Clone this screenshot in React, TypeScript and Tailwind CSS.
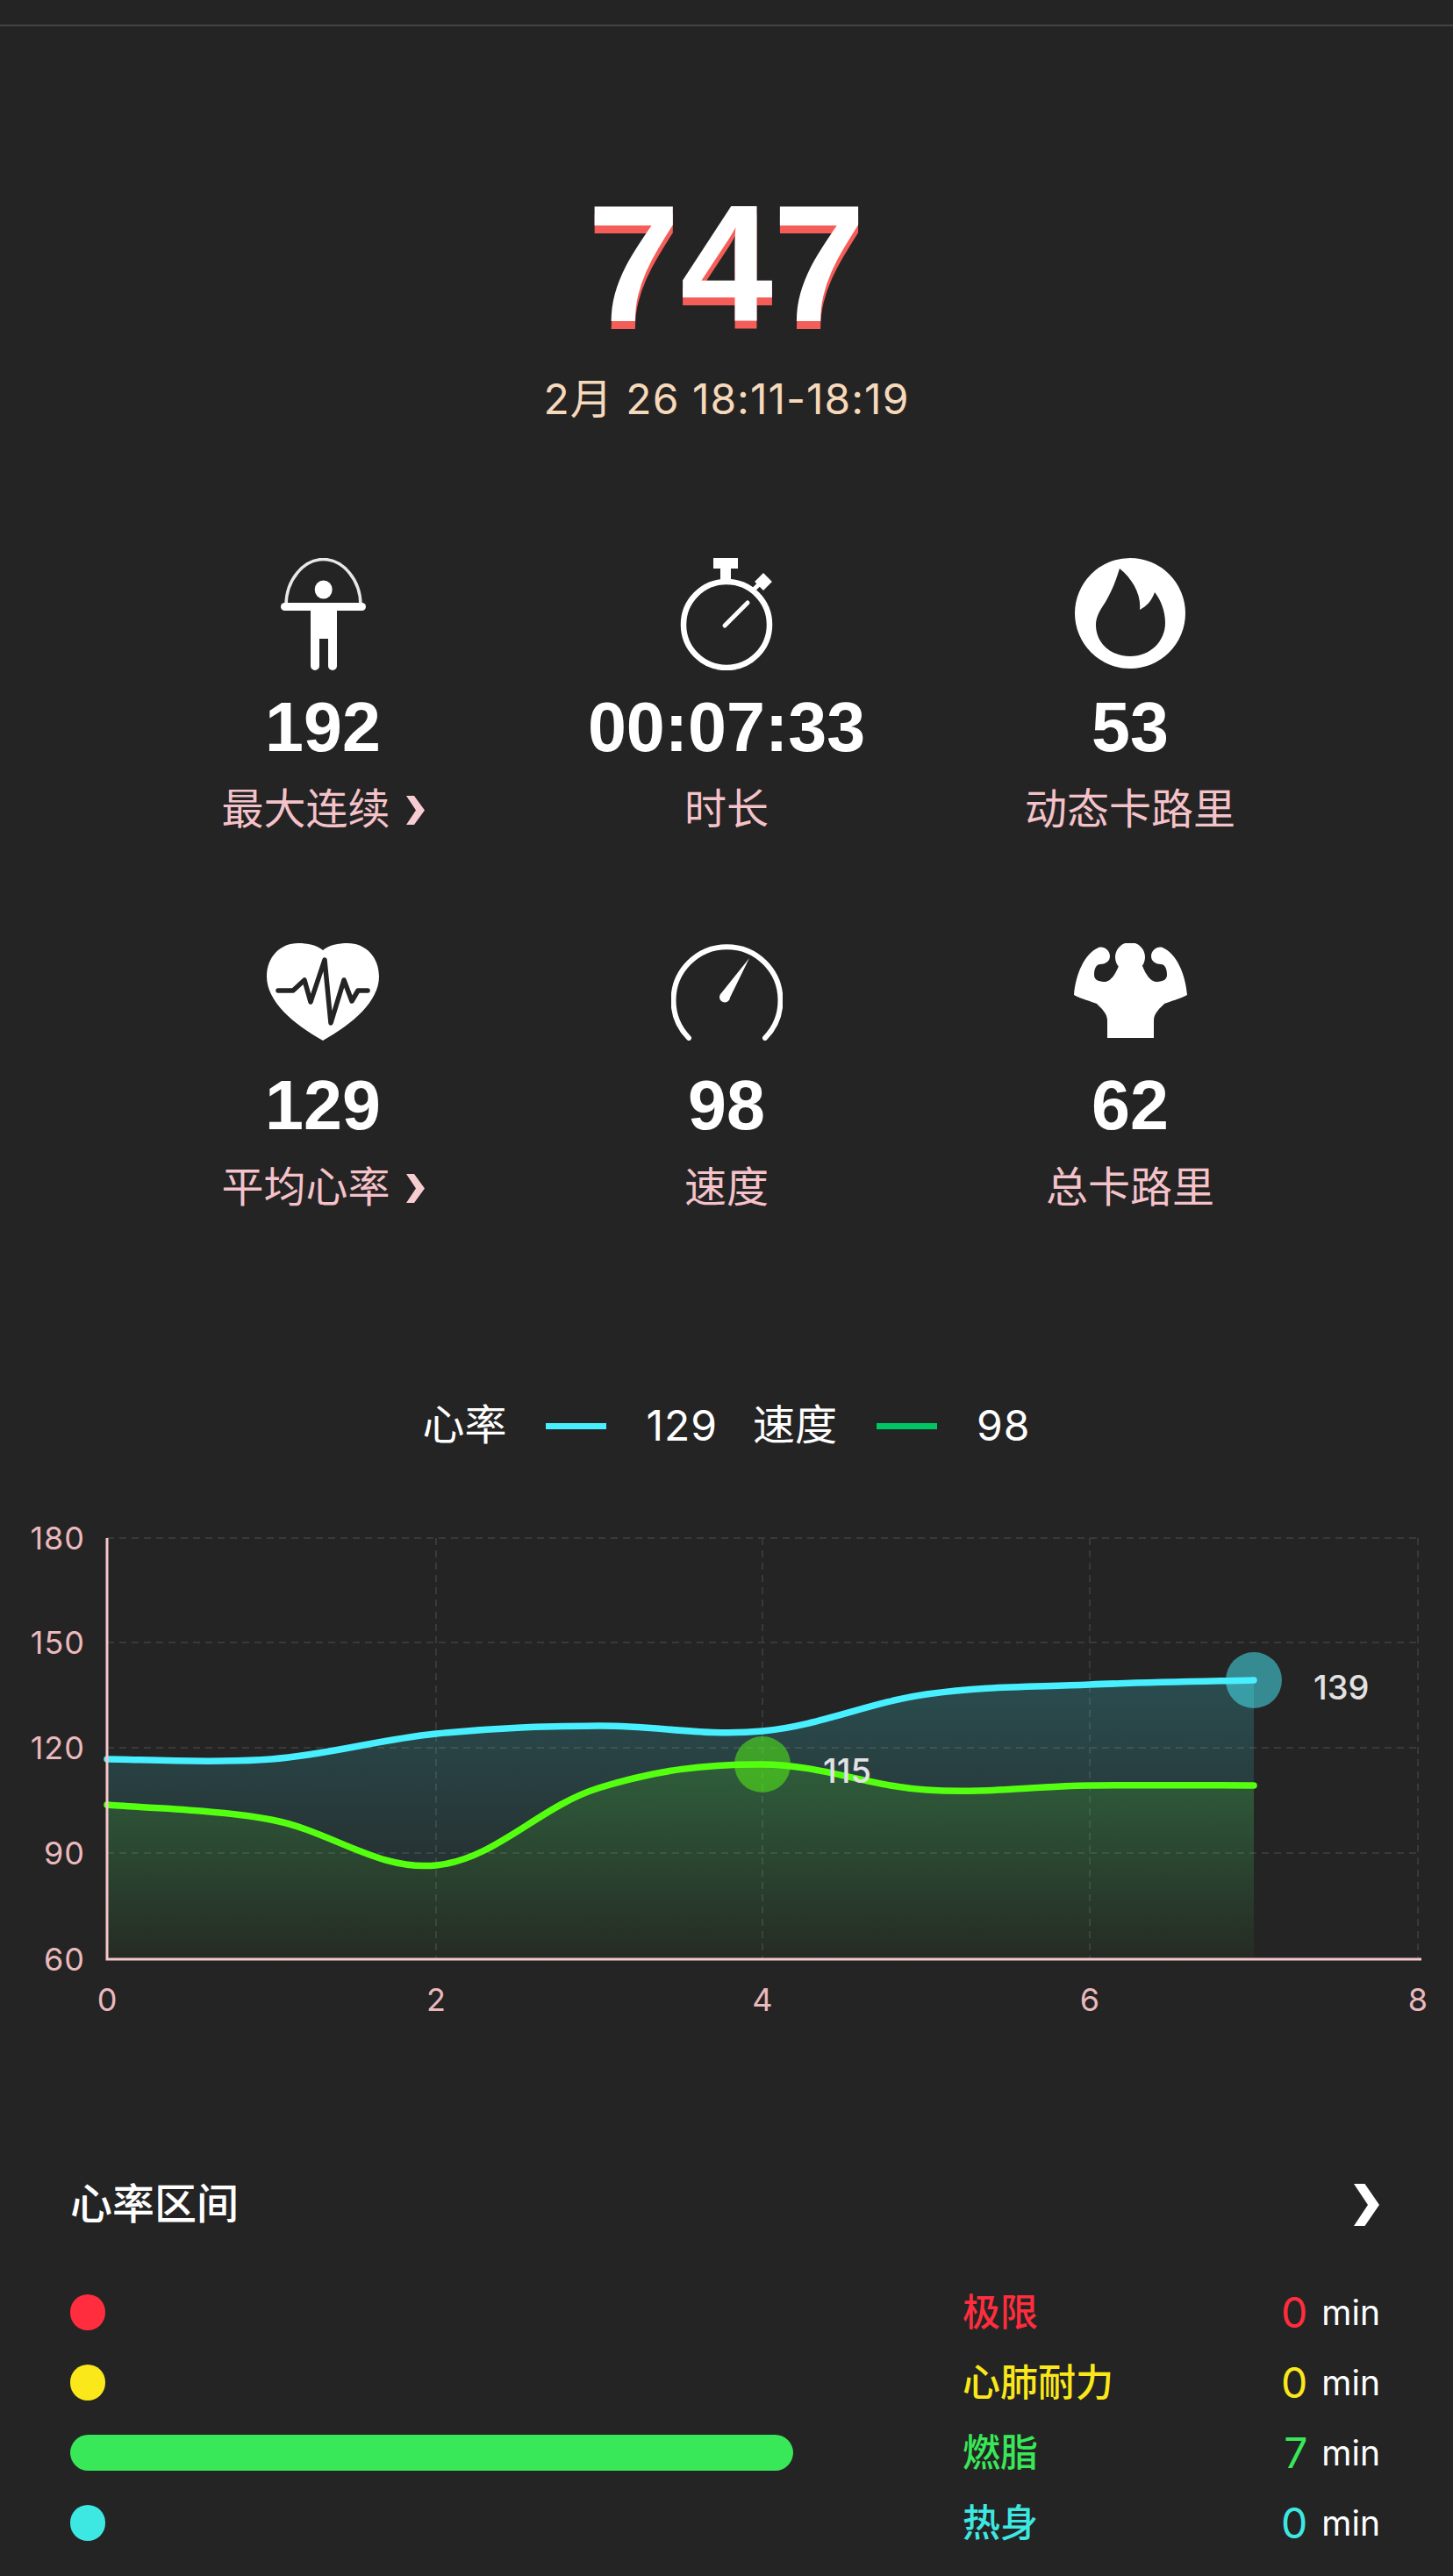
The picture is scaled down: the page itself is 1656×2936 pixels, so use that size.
import React from 'react';

const heartRate: [number, number][] = [
  [122, 2004], [309, 2004], [497, 1975], [682, 1966], [869, 1972], [1056, 1930], [1242, 1919], [1429, 1914],
];
const speed: [number, number][] = [
  [122, 2056], [309, 2073], [497, 2125], [682, 2037], [869, 2010], [1056, 2039], [1242, 2034], [1429, 2034],
];

// smooth line through the points, same feel as an echarts smooth series
const smoothPath = (pts: [number, number][]) => {
  let d = `M${pts[0][0]} ${pts[0][1]}`;
  for (let i = 0; i < pts.length - 1; i++) {
    const p0 = pts[Math.max(i - 1, 0)];
    const p1 = pts[i];
    const p2 = pts[i + 1];
    const p3 = pts[Math.min(i + 2, pts.length - 1)];
    const c1x = p1[0] + (p2[0] - p0[0]) * 0.18;
    const c1y = p1[1] + (p2[1] - p0[1]) * 0.18;
    const c2x = p2[0] - (p3[0] - p1[0]) * 0.18;
    const c2y = p2[1] - (p3[1] - p1[1]) * 0.18;
    d += ` C${c1x} ${c1y} ${c2x} ${c2y} ${p2[0]} ${p2[1]}`;
  }
  return d;
};

const Chevron = () => (
  <svg width="21" height="33" viewBox="0 0 21 33" className="shrink-0">
    <polygon points="0,0 9,0 21,16.5 9,33 0,33 11,16.5" fill="#f7cdd2" />
  </svg>
);

const RopeIcon = () => (
  <svg width="97" height="128" viewBox="0 0 97 128">
    <path d="M6 54C6 25 26 1.5 48.5 1.5S91 25 91 54" fill="none" stroke="#e8e8e8" strokeWidth="3.5" />
    <ellipse cx="48.7" cy="36" rx="10" ry="10.5" fill="#fff" />
    <rect x="0" y="51" width="97" height="9" rx="4.5" fill="#fff" />
    <path d="M34 58H64V123A5 5 0 0 1 54 123V92H44V123A5 5 0 0 1 34 123Z" fill="#fff" />
  </svg>
);

const WatchIcon = () => (
  <svg width="106" height="128" viewBox="0 0 106 128">
    <rect x="38" y="0" width="28" height="12" fill="#fff" />
    <rect x="46" y="12" width="12" height="15" fill="#fff" />
    <circle cx="53" cy="76" r="49" fill="none" stroke="#fff" strokeWidth="6.5" />
    <path d="M84 36L91 29" stroke="#fff" strokeWidth="5" />
    <rect x="88" y="20" width="14" height="14" transform="rotate(45 95 27)" fill="#fff" />
    <path d="M51 77L77 51" stroke="#fff" strokeWidth="5" strokeLinecap="round" />
  </svg>
);

const FireIcon = () => (
  <svg width="126" height="126" viewBox="0 0 126 126">
    <path
      fillRule="evenodd"
      fill="#fff"
      d="M63 0A63 63 0 1 1 63 126A63 63 0 1 1 63 0ZM51 12C46 28 42 38 35 50C28 60 24 68 24 76C24 97 41 112 63 112C86 112 103 95 103 74C103 60 98 48 91 39C88 48 82 55 74 59C76 42 66 24 51 12Z"
    />
  </svg>
);

const HeartIcon = () => (
  <svg width="128" height="111" viewBox="0 0 128 111">
    <path
      fill="#fff"
      d="M64 8C57 2 46 0 36 0C15 0 0 16 0 38C0 66 30 92 64 111C98 92 128 66 128 38C128 16 113 0 92 0C82 0 71 2 64 8Z"
    />
    <path
      d="M13 54H30L43 42L50 67L66 19L73 91L88 42L97 66L104 54H115"
      fill="none"
      stroke="#242424"
      strokeWidth="5.5"
      strokeLinejoin="round"
      strokeLinecap="round"
    />
  </svg>
);

const GaugeIcon = () => (
  <svg width="127" height="111" viewBox="0 0 127 111">
    <path d="M20 108A61 61 0 1 1 107 108" fill="none" stroke="#fff" strokeWidth="6" strokeLinecap="round" />
    <path d="M89 17L67 62A6 6 0 1 1 57 57Z" fill="#fff" />
  </svg>
);

const MuscleIcon = () => (
  <svg width="129" height="109" viewBox="0 0 129 109">
    <circle cx="64" cy="16" r="17" fill="#fff" />
    <path
      fill="#fff"
      d="M0 59C2 35 12 12 28 5C34 3 41 8 41 15C41 21 35 24 30 24C25 24 23 30 23 36C23 42 28 44 36 44C42 43 47 36 51 26L78 26C82 36 87 43 93 44C101 44 106 42 106 36C106 30 104 24 99 24C94 24 88 21 88 15C88 8 95 3 101 5C117 12 127 35 129 59C120 64 110 66 103 69C98 74 91 80 91 88L91 108L38 108L38 88C38 80 31 74 26 69C19 66 9 64 0 59Z"
    />
  </svg>
);

const StatCell = ({
  icon,
  value,
  label,
  arrow,
  iconBox,
}: {
  icon: React.ReactNode;
  value: string;
  label: string;
  arrow?: boolean;
  iconBox: string;
}) => (
  <div className="flex flex-col items-center">
    <div className={`flex items-start justify-center ${iconBox}`}>{icon}</div>
    <div className="mt-[25px] text-[79px] leading-[80px] font-bold text-white">{value}</div>
    <div className="mt-[30px] flex h-12 items-center gap-[18px] text-[48px] leading-[48px] text-[#f4c2c9]">
      <span>{label}</span>
      {arrow && <Chevron />}
    </div>
  </div>
);

const Chart = () => {
  const xTicks = [122, 497, 869, 1242, 1616];
  const yTicks = [1752, 1871, 1991, 2111, 2232];
  const xLabels = ['0', '2', '4', '6', '8'];
  const yLabels = ['180', '150', '120', '90', '60'];
  const hr = smoothPath(heartRate);
  const sp = smoothPath(speed);

  return (
    <svg viewBox="0 1720 1656 600" className="mt-[72px] block h-[600px] w-full [font-family:Inter,sans-serif]">
      <defs>
        <linearGradient id="hrFill" gradientUnits="userSpaceOnUse" x1="0" y1="1914" x2="0" y2="2232">
          <stop offset="0" stopColor="#44f0ff" stopOpacity="0.2" />
          <stop offset="1" stopColor="#44f0ff" stopOpacity="0" />
        </linearGradient>
        <linearGradient id="spFill" gradientUnits="userSpaceOnUse" x1="0" y1="2010" x2="0" y2="2232">
          <stop offset="0" stopColor="#55ff10" stopOpacity="0.15" />
          <stop offset="1" stopColor="#55ff10" stopOpacity="0.03" />
        </linearGradient>
      </defs>

      {/* grid */}
      {yTicks.slice(0, 4).map((y) => (
        <line key={y} x1="122" x2="1616" y1={y} y2={y} stroke="#393939" strokeWidth="2" strokeDasharray="8 6" />
      ))}
      {xTicks.slice(1).map((x) => (
        <line key={x} x1={x} x2={x} y1="1752" y2="2232" stroke="#393939" strokeWidth="2" strokeDasharray="8 6" />
      ))}

      {/* areas */}
      <path d={`${hr} L1429 2232 L122 2232 Z`} fill="url(#hrFill)" />
      <path d={`${sp} L1429 2232 L122 2232 Z`} fill="url(#spFill)" />

      {/* series lines */}
      <path d={hr} fill="none" stroke="#48f0ff" strokeWidth="7.5" strokeLinecap="round" />
      <path d={sp} fill="none" stroke="#55ff10" strokeWidth="7.5" strokeLinecap="round" />

      <circle cx="1429" cy="1914" r="32" fill="#48f0ff" fillOpacity="0.5" />
      <circle cx="869" cy="2010" r="32" fill="#55ff10" fillOpacity="0.5" />

      {/* axes */}
      <path d="M122 1752V2232H1620" fill="none" stroke="#f5c6cb" strokeWidth="3" />

      {yLabels.map((t, i) => (
        <text key={t} x="97" y={yTicks[i] + 13} textAnchor="end" fontSize="36" letterSpacing="1" fill="#eab9bd">
          {t}
        </text>
      ))}
      {xLabels.map((t, i) => (
        <text key={t} x={xTicks[i]} y="2291" textAnchor="middle" fontSize="36" fill="#eab9bd">
          {t}
        </text>
      ))}

      <text x="1497" y="1936" fontSize="38" fontWeight="500" fill="#e2e2e2">
        139
      </text>
      <text x="938" y="2031" fontSize="38" fontWeight="500" fill="#e2e2e2">
        115
      </text>
    </svg>
  );
};

const zones = [
  { name: '极限', mins: '0', bar: 'w-10 bg-[#ff2d3d]', text: 'text-[#ff2d3d]' },
  { name: '心肺耐力', mins: '0', bar: 'w-10 bg-[#fbe81a]', text: 'text-[#fbe81a]' },
  { name: '燃脂', mins: '7', bar: 'w-[824px] bg-[#38e858]', text: 'text-[#38e858]' },
  { name: '热身', mins: '0', bar: 'w-10 bg-[#3de8e2]', text: 'text-[#3de8e2]' },
];

export default function App() {
  return (
    <div className="min-h-[2936px] w-full bg-[#242424] [font-family:'Liberation_Sans','Noto_Sans_CJK_SC',sans-serif]">
      <div className="h-[30px] border-b-2 border-[#444444]" />

      {/* total jumps */}
      <div className="flex flex-col items-center pt-[175px]">
        <div className="text-[190px] leading-[190px] font-bold text-white [text-shadow:0_9px_0_#f55d58]">747</div>
        <div className="mt-9 text-[48px] leading-[48px] tracking-[1px] text-[#f6d9bb] [font-family:Inter,'Noto_Sans_CJK_SC',sans-serif]">
          2月 26 18:11-18:19
        </div>
      </div>

      {/* stats */}
      <div className="mt-[157px] grid grid-cols-3 gap-y-[128px] px-[138px]">
        <StatCell icon={<RopeIcon />} value="192" label="最大连续" arrow iconBox="h-[128px]" />
        <StatCell icon={<WatchIcon />} value="00:07:33" label="时长" iconBox="h-[128px]" />
        <StatCell icon={<FireIcon />} value="53" label="动态卡路里" iconBox="h-[128px]" />
        <StatCell icon={<HeartIcon />} value="129" label="平均心率" arrow iconBox="h-[120px]" />
        <StatCell icon={<GaugeIcon />} value="98" label="速度" iconBox="h-[120px]" />
        <StatCell icon={<MuscleIcon />} value="62" label="总卡路里" iconBox="h-[120px]" />
      </div>

      {/* legend */}
      <div className="mt-[223px] flex h-12 items-center justify-center text-[48px] leading-[48px] text-white">
        <span>心率</span>
        <span className="mx-[45px] h-[7px] w-[69px] bg-[#48f0ff]" />
        <span className="text-[48px] tracking-[1px] [font-family:Inter,sans-serif]">129</span>
        <span className="ml-[40px]">速度</span>
        <span className="mx-[45px] h-[7px] w-[69px] bg-[#00c763]" />
        <span className="text-[48px] tracking-[1px] [font-family:Inter,sans-serif]">98</span>
      </div>

      <Chart />

      {/* heart rate zones */}
      <div className="mt-[168px] flex h-12 items-center justify-between pr-[84px] pl-[80px]">
        <span className="text-[48px] leading-[48px] font-medium text-white">心率区间</span>
        <svg width="29" height="48" viewBox="0 0 29 48">
          <polygon points="0,0 12.5,0 29,24 12.5,48 0,48 16,24" fill="#fff" />
        </svg>
      </div>

      <div className="mt-[78px] flex flex-col gap-[39px] pr-[83px] pl-[80px]">
        {zones.map((z) => (
          <div key={z.name} className="flex h-[41px] items-center">
            <div className="w-[1017px] shrink-0">
              <div className={`h-[41px] rounded-full ${z.bar}`} />
            </div>
            <span className={`text-[43px] leading-[42px] font-medium ${z.text}`}>{z.name}</span>
            <span className={`ml-auto text-[48px] leading-[48px] [font-family:Inter,sans-serif] ${z.text}`}>{z.mins}</span>
            <span className="ml-[16px] text-[39px] leading-[48px] text-white [font-family:Inter,sans-serif]">min</span>
          </div>
        ))}
      </div>
    </div>
  );
}
